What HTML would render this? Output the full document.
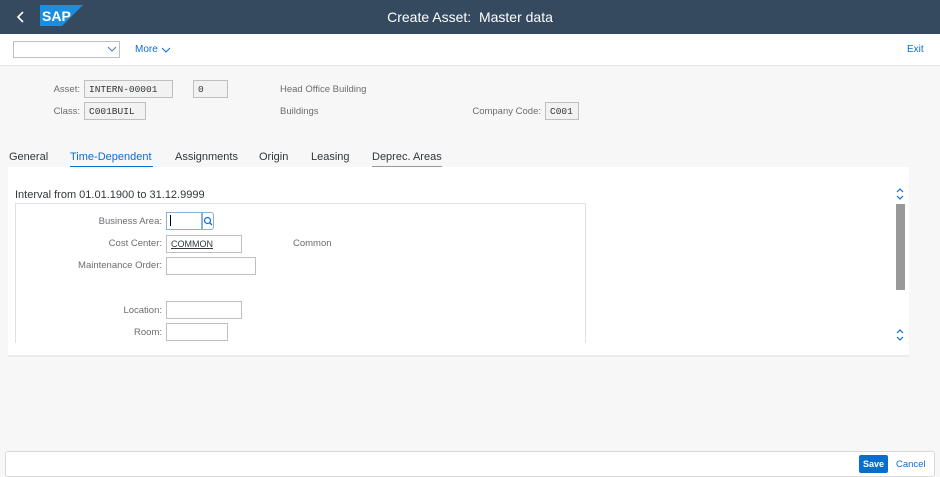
<!DOCTYPE html>
<html><head><meta charset="utf-8"><style>
*{margin:0;padding:0;box-sizing:border-box}
body{width:940px;height:475px;background:#f7f7f7;font-family:"Liberation Sans",Arial,sans-serif;position:relative;overflow:hidden;color:#32363a}
.a{position:absolute}
.lbl{font-size:9.5px;color:#6a6d70;text-align:right}
.inp{position:absolute;border:1px solid #bfbfbf;background:#f2f2f2;font-family:"Liberation Mono",monospace;font-size:9.5px;color:#32363a;padding:3px 4px;height:18px;line-height:11px}
.win{position:absolute;border:1px solid #bfbfbf;background:#fff;height:18px;font-size:9px;padding:3px 4px}
.tab{position:absolute;top:151px;font-size:11px;color:#32363a}
</style></head><body>
<div class="a" style="left:0;top:0;width:940px;height:34px;background:#354a5f"></div>
<svg class="a" style="left:16px;top:10px" width="10" height="14"><path d="M7 2 L2 7 L7 12" stroke="#fff" stroke-width="1.6" fill="none"/></svg>
<svg class="a" style="left:40px;top:5px" width="43" height="21"><polygon points="0,0 43,0 22,21 0,21" fill="#1a8ee0"/><text x="2" y="16" font-family="Liberation Sans" font-weight="bold" font-size="14" fill="#fff">SAP</text></svg>
<div class="a" style="left:0;top:9px;width:940px;text-align:center;color:#fff;font-size:14px">Create Asset:&nbsp; Master data</div>
<div class="a" style="left:0;top:34px;width:940px;height:32px;background:#fff;border-bottom:1px solid #e5e5e5"></div>
<div class="a" style="left:13px;top:41px;width:107px;height:17px;border:1px solid #bfbfbf;background:#fff"></div>
<svg class="a" style="left:107px;top:46px" width="10" height="7"><path d="M1 1 L5 5 L9 1" stroke="#5a7aa0" fill="none"/></svg>
<div class="a" style="left:135px;top:44px;font-size:10px;color:#0a6ed1">More</div>
<svg class="a" style="left:161px;top:47px" width="10" height="7"><path d="M1 1 L5 5 L9 1" stroke="#0a6ed1" fill="none"/></svg>
<div class="a" style="left:907px;top:44px;font-size:10px;color:#0a6ed1">Exit</div>

<div class="a lbl" style="left:30px;top:84px;width:50px">Asset:</div>
<div class="inp" style="left:84px;top:80px;width:89px">INTERN-00001</div>
<div class="inp" style="left:193px;top:80px;width:35px">0</div>
<div class="a lbl" style="left:280px;top:84px;text-align:left">Head Office Building</div>
<div class="a lbl" style="left:30px;top:106px;width:50px">Class:</div>
<div class="inp" style="left:84px;top:102px;width:62px">C001BUIL</div>
<div class="a lbl" style="left:280px;top:106px;text-align:left">Buildings</div>
<div class="a lbl" style="left:440px;top:106px;width:101px">Company Code:</div>
<div class="inp" style="left:545px;top:102px;width:34px">C001</div>

<div class="tab" style="left:9px">General</div>
<div class="tab" style="left:70px;color:#0a6ed1">Time-Dependent</div>
<div class="a" style="left:70px;top:166px;width:83px;height:2px;background:#0a6ed1"></div>
<div class="tab" style="left:175px">Assignments</div>
<div class="tab" style="left:259px">Origin</div>
<div class="tab" style="left:311px">Leasing</div>
<div class="tab" style="left:372px">Deprec. Areas</div>
<div class="a" style="left:372px;top:166px;width:70px;height:1px;background:#999"></div>

<div class="a" style="left:8px;top:167px;width:901px;height:190px;background:#fff;border-bottom:2px solid #ebebeb"></div>
<div class="a" style="left:15px;top:189px;font-size:11px;color:#32363a">Interval from 01.01.1900 to 31.12.9999</div>
<div class="a" style="left:15px;top:203px;width:571px;height:140px;border:1px solid #e0e0e0;border-bottom:none"></div>
<div class="a lbl" style="left:50px;top:216px;width:112px">Business Area:</div>
<div class="a" style="left:166px;top:212px;width:36px;height:18px;border:1px solid #8ab0d8;background:#fff"></div>
<div class="a" style="left:170px;top:215px;width:1px;height:11px;background:#000"></div>
<div class="a" style="left:202px;top:212px;width:12px;height:18px;border:1px solid #8ab0d8;border-radius:0 3px 3px 0"></div>
<svg class="a" style="left:203px;top:216px" width="10" height="10"><circle cx="4.5" cy="4.5" r="3" stroke="#0a6ed1" fill="none" stroke-width="1.2"/><path d="M6.5 6.5 L9 9" stroke="#0a6ed1" stroke-width="1.3"/></svg>
<div class="a lbl" style="left:50px;top:238px;width:112px">Cost Center:</div>
<div class="win" style="left:166px;top:235px;width:76px;text-decoration:underline">COMMON</div>
<div class="a lbl" style="left:293px;top:238px;text-align:left">Common</div>
<div class="a lbl" style="left:50px;top:260px;width:112px">Maintenance Order:</div>
<div class="win" style="left:166px;top:257px;width:90px"></div>
<div class="a lbl" style="left:50px;top:305px;width:112px">Location:</div>
<div class="win" style="left:166px;top:301px;width:76px"></div>
<div class="a lbl" style="left:50px;top:327px;width:112px">Room:</div>
<div class="win" style="left:166px;top:323px;width:62px"></div>

<svg class="a" style="left:896px;top:188px" width="8" height="12"><path d="M1 4 L4 1 L7 4 M1 8 L4 11 L7 8" stroke="#0a6ed1" fill="none" stroke-width="1.2"/></svg>
<div class="a" style="left:896px;top:204px;width:9px;height:86px;background:#999"></div>
<svg class="a" style="left:896px;top:329px" width="8" height="12"><path d="M1 4 L4 1 L7 4 M1 8 L4 11 L7 8" stroke="#0a6ed1" fill="none" stroke-width="1.2"/></svg>

<div class="a" style="left:5px;top:451px;width:930px;height:26px;background:#fff;border:1px solid #d9d9d9;border-radius:3px"></div>
<div class="a" style="left:859px;top:455px;width:29px;height:18px;background:#0a6ed1;border-radius:2px;color:#fff;font-size:9px;font-weight:bold;text-align:center;line-height:18px">Save</div>
<div class="a" style="left:896px;top:459px;font-size:9.5px;color:#0a6ed1">Cancel</div>
</body></html>
